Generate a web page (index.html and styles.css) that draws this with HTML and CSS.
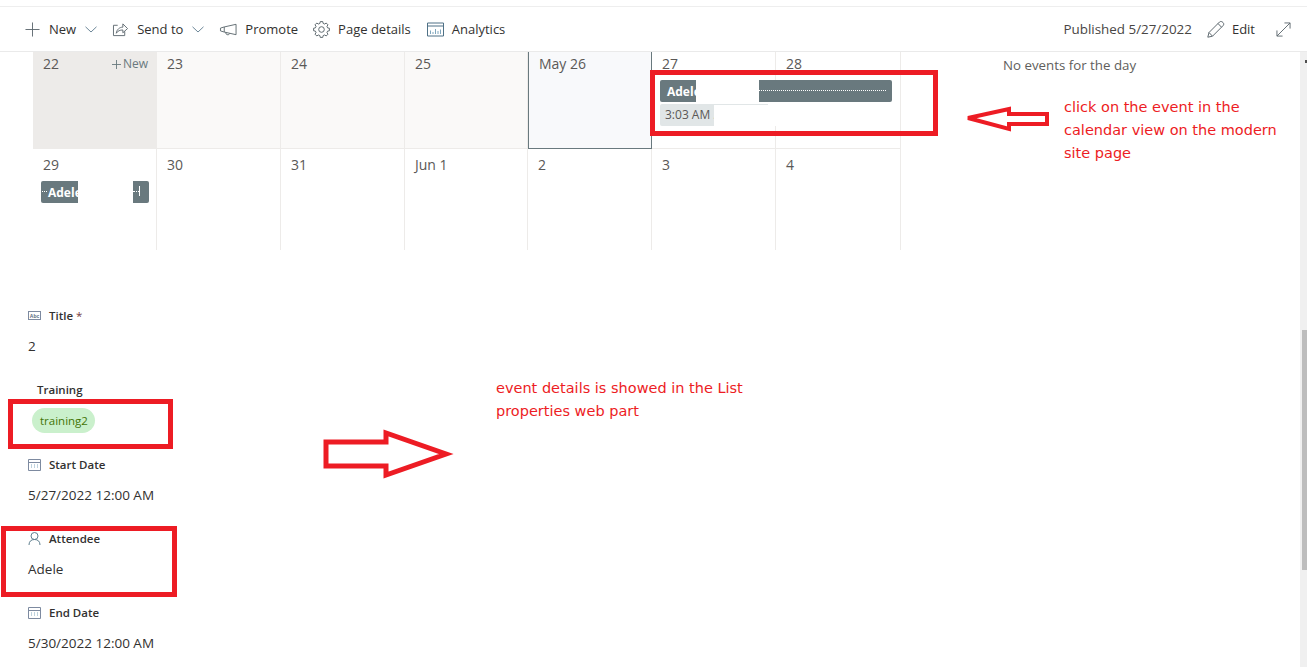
FILE: index.html
```html
<!DOCTYPE html>
<html lang="en">
<head>
<meta charset="utf-8">
<title>Calendar view and list properties</title>
<link rel="stylesheet" href="styles.css">
</head>
<body>
<div class="page">
  <header class="command-bar">
    <div class="cmd"><svg class="ico" viewBox="0 0 16 16"><path d="M8 .5v15M.5 8h15"/></svg><span class="cmd-label">New</span><svg class="chev" viewBox="0 0 12 7"><path d="M.5.8 6 6l5.500-5.200"/></svg></div>
    <div class="cmd"><svg class="ico" viewBox="0 0 16 16"><path d="M5 3.500H.5v11h12V10"/><path d="M3.500 12c.5-4 3.500-6.500 7-6.500V2l5 5-5 4.500V8.500c-3 0-5.500 1-7 3.500z"/></svg><span class="cmd-label">Send to</span><svg class="chev" viewBox="0 0 12 7"><path d="M.5.8 6 6l5.500-5.200"/></svg></div>
    <div class="cmd cmd-tight"><svg class="ico ico-wide" viewBox="0 0 18 14"><path d="M.5 5.500v3l4 1.200L17 12.500V1.500L4.500 4.300z"/><path d="M4.500 4.300v5.400M6 10.200c0 3 4 3 4 1"/></svg><span class="cmd-label">Promote</span></div>
    <div class="cmd cmd-tight cmd-details"><svg class="ico ico-wide" viewBox="-8.500 -8.500 17 17"><polygon points="6.085,-1.63 7.9,-1.25 7.9,1.25 6.085,1.63 5.456,3.15 6.47,4.7 4.7,6.47 3.15,5.456 1.63,6.085 1.25,7.9 -1.25,7.9 -1.63,6.085 -3.15,5.456 -4.7,6.47 -6.47,4.7 -5.456,3.15 -6.085,1.63 -7.9,1.25 -7.9,-1.25 -6.085,-1.63 -5.456,-3.15 -6.47,-4.7 -4.7,-6.47 -3.15,-5.456 -1.63,-6.085 -1.25,-7.9 1.25,-7.9 1.63,-6.085 3.15,-5.456 4.7,-6.47 6.47,-4.7 5.456,-3.15"/><circle r="2.800"/></svg><span class="cmd-label">Page details</span></div>
    <div class="cmd cmd-tight"><svg class="ico ico-wide ico-blue" viewBox="0 0 17 14"><path d="M.5.500h16v13H.5zM.5 3.500h16"/><path class="thin" d="M3.500 11.500V8M6 11.500V9.500M8.500 11.500V6.500M11 11.500V8.500M13.500 11.500V7"/></svg><span class="cmd-label">Analytics</span></div>
    <div class="cmd-right">
      <span class="cmd-label published">Published 5/27/2022</span>
      <div class="cmd cmd-tight"><svg class="ico ico-wide" viewBox="0 0 17 17"><path d="M.8 16.200 2 11.500 12.500 1c1-1 2.500-.5 3.500.5s1 2.200 0 3.200L5.500 15.200zM2 11.500l3.500 3.700M11 2.500l3.500 3.700"/></svg><span class="cmd-label">Edit</span></div>
      <svg class="ico expand" viewBox="0 0 16 16"><path d="M1 15 15 1M9 1h6v6M1 9v6h6"/></svg>
    </div>
  </header>

  <div class="viewport">
    <main class="content">
      <section class="calendar-row">
        <div class="calendar">
          <div class="cal-grid">
            <div class="day day-hover"><span>22</span><span class="new-link"><svg class="new-plus" viewBox="0 0 10 10"><path d="M5 0v10M0 5h10"/></svg>New</span></div>
            <div class="day day-past"><span>23</span></div>
            <div class="day day-past"><span>24</span></div>
            <div class="day day-past"><span>25</span></div>
            <div class="day day-today"><span>May 26</span></div>
            <div class="day"><span>27</span></div>
            <div class="day"><span>28</span></div>
            <div class="day"><span>29</span></div>
            <div class="day"><span>30</span></div>
            <div class="day"><span>31</span></div>
            <div class="day"><span>Jun 1</span></div>
            <div class="day"><span>2</span></div>
            <div class="day"><span>3</span></div>
            <div class="day"><span>4</span></div>
          </div>
          <div class="cal-grid cal-events">
            <div class="event event-one">
              <div class="event-bar">
                <div class="bar-piece bar-start"><b>Adele</b></div>
                <div class="bar-piece bar-end"><i class="dots"></i></div>
              </div>
              <div class="event-time"><span class="time-chip">3:03 AM .</span><i class="time-rest"></i></div>
            </div>
            <div class="event event-two">
              <div class="event-bar">
                <div class="bar-piece bar-start-two"><i class="lead-dots"></i><b>Adele</b></div>
                <div class="bar-piece bar-end-two"><i class="tail-dots"></i><i class="tail-stop"></i></div>
              </div>
            </div>
          </div>
        </div>
        <aside class="agenda">No events for the day</aside>
      </section>

      <section class="props">
        <div class="field field-tight">
          <div class="field-label"><svg class="field-ico" viewBox="0 0 13 9"><rect x=".5" y=".5" width="12" height="8"/><text x="6.500" y="6.500" class="abc">Abc</text></svg>Title <em class="req">*</em></div>
          <div class="field-value">2</div>
        </div>
        <div class="field">
          <div class="field-label label-plain">Training</div>
          <div class="field-value value-pill"><span class="pill">training2</span></div>
        </div>
        <div class="field field-tight">
          <div class="field-label"><svg class="field-ico cal" viewBox="0 0 13 13"><path d="M.5 1.500h12v11H.5zM.5 4.500h12"/><path class="thin" d="M3 7h1M6 7h1M9 7h1M3 9h1M6 9h1M9 9h1"/></svg>Start Date</div>
          <div class="field-value">5/27/2022 12:00 AM</div>
        </div>
        <div class="field field-tight">
          <div class="field-label"><svg class="field-ico cal person" viewBox="0 0 13 13"><circle cx="6.500" cy="4" r="3.500"/><path d="M1 13c0-3.500 2-5.500 5.500-5.500S12 9.500 12 13"/></svg>Attendee</div>
          <div class="field-value">Adele</div>
        </div>
        <div class="field field-tight">
          <div class="field-label"><svg class="field-ico cal" viewBox="0 0 13 13"><path d="M.5 1.500h12v11H.5zM.5 4.500h12"/><path class="thin" d="M3 7h1M6 7h1M9 7h1M3 9h1M6 9h1M9 9h1"/></svg>End Date</div>
          <div class="field-value">5/30/2022 12:00 AM</div>
        </div>
      </section>
    </main>
    <div class="scrollbar"><i class="scroll-arrow"></i><i class="scroll-thumb"></i></div>
  </div>

  <div class="mark mark-event"></div>
  <div class="mark mark-training"></div>
  <div class="mark mark-attendee"></div>
  <svg class="arrow arrow-left" viewBox="0 0 84 24"><path d="M2 12 43 3v5h38v10H43v5z"/></svg>
  <svg class="arrow arrow-right" viewBox="0 0 128 48"><path d="M2 12h60V3l60 21-60 21v-9H2z"/></svg>
  <p class="note note-calendar">click on the event in the<br>calendar view on the modern<br>site page</p>
  <p class="note note-props">event details is showed in the List<br>properties web part</p>
</div>
</body>
</html>
```

FILE: styles.css
```css
* { box-sizing: border-box; }
html, body { margin: 0; height: 100%; overflow: hidden; background: #fff; }
body { font-family: "Open Sans", "Noto Sans", sans-serif; color: #323130; }

.page {
  position: relative;
  width: 1307px;
  height: 667px;
  padding-top: 6px;
  display: flex;
  flex-direction: column;
  overflow: hidden;
}

/* Command bar */
.command-bar {
  height: 46px;
  flex: none;
  border-top: 1px solid #eeeeee;
  border-bottom: 1px solid #eaeaea;
  display: flex;
  align-items: center;
  gap: 16px;
  padding: 0 16px 0 25px;
  font-size: 13px;
}
.cmd { display: flex; align-items: center; gap: 9px; }
.cmd-tight { gap: 8px; }
.cmd-details { margin-left: -1px; }
.cmd-label { white-space: nowrap; line-height: 20px; }
.ico { width: 15px; height: 15px; flex: none; fill: none; stroke: #5f6a70; stroke-width: 1; overflow: visible; }
.ico-wide { width: 17px; height: 17px; }
.ico-blue { stroke: #4f7186; }
.thin { stroke: #7fa6bd; }
.chev { width: 12px; height: 7px; fill: none; stroke: #6d8798; stroke-width: 1; }
.cmd-right { margin-left: auto; display: flex; align-items: center; gap: 15px; }
.published { color: #484644; font-size: 13.400px; }
.expand { margin-left: 6px; }

/* Scrolled area */
.viewport { flex: 1; min-height: 0; display: flex; overflow: hidden; }
.content { flex: 1; min-width: 0; margin-top: -4px; }
.scrollbar { width: 7px; flex: none; background: #f0f0f0; padding: 8px 0 0 2px; display: flex; flex-direction: column; align-items: flex-end; }
.scroll-arrow { width: 2px; height: 3px; background: #505050; }
.scroll-thumb { width: 5px; height: 240px; margin-top: 267px; background: #bdbdbd; }

/* Calendar */
.calendar-row { display: flex; padding-left: 33px; }
.calendar { width: 868px; display: grid; }
.cal-grid {
  grid-area: 1 / 1;
  display: grid;
  grid-template-columns: 124px 124px 124px 123px 124px 124px 125px;
  grid-template-rows: 101px 101px;
  font-size: 14px;
  color: #5a5856;
}
.day {
  padding: 5px 10px 0;
  line-height: 22px;
  border-right: 1px solid #edebe9;
  border-bottom: 1px solid #edebe9;
  display: flex;
  justify-content: space-between;
  align-items: flex-start;
  font-weight: 500;
}
.day:nth-child(n+8) { border-bottom: 0; }
.day-hover { background: #edebe9; padding-right: 8px; border-right-color: #edebe9; }
.day-past { background: #faf9f8; }
.day-today { background: #f8f9fb; border: 1px solid #69797e; border-top: 0; }
.new-link { display: flex; align-items: center; gap: 2px; font-size: 12px; font-weight: 400; color: #69797e; }
.new-plus { width: 9px; height: 9px; fill: none; stroke: #69797e; stroke-width: 1; }

.event { margin-top: 32px; font-size: 12px; align-self: start; }
.event-one { grid-column: 6 / 8; grid-row: 1; margin-left: 8px; margin-right: 9px; }
.event-two { grid-column: 1; grid-row: 2; margin-left: 8px; margin-right: 8px; }
.event-bar { height: 22px; background: #fff; display: flex; justify-content: space-between; }
.bar-piece { background: #69797e; color: #fff; display: flex; align-items: center; overflow: hidden; white-space: nowrap; }
.bar-piece b { font-weight: 700; }
.bar-start { width: 36px; padding-left: 7px; border-radius: 2px 0 0 2px; }
.bar-end { width: 133px; border-radius: 0 2px 2px 0; padding-right: 6px; }
.dots { flex: 1; border-top: 1px dotted #fff; margin-top: -2px; }
.bar-start-two { width: 37px; padding-left: 1px; border-radius: 2px 0 0 2px; }
.lead-dots { width: 5px; flex: none; border-top: 1px dotted #fff; margin-right: 1px; margin-top: -2px; }
.bar-end-two { width: 16px; border-radius: 0 2px 2px 0; }
.tail-dots { width: 6px; border-top: 1px dotted #fff; margin-top: -2px; }
.tail-stop { width: 1px; height: 10px; background: #fff; margin-top: -2px; }
.event-time { height: 24px; background: #fff; padding-top: 2px; display: flex; align-items: flex-start; }
.time-chip { width: 54px; height: 22px; flex: none; background: #e1e6e7; color: #5a5856; line-height: 22px; padding-left: 5px; overflow: hidden; white-space: nowrap; border-radius: 2px 0 0 2px; }
.time-rest { width: 54px; height: 1px; background: #e1e6e7; }

.agenda { padding-left: 102px; padding-top: 7px; font-size: 13.300px; line-height: 20px; color: #605e5c; }

/* List properties */
.props { padding: 55px 0 0 28px; }
.field { height: 75px; }
.field-tight { height: 74px; }
.field-label { display: flex; align-items: center; height: 20px; font-size: 11.500px; font-weight: 600; color: #323130; gap: 8px; }
.label-plain { padding-left: 9px; }
.req { font-style: normal; font-weight: 400; color: #7a3a40; margin-left: -5px; }
.field-ico { width: 13px; height: 9px; flex: none; fill: none; stroke: #7d8aa0; stroke-width: 1; overflow: visible; }
.field-ico.cal { height: 13px; }
.field-ico.person { stroke: #5f7f8f; }
.abc { font-family: "Liberation Sans", sans-serif; font-size: 5px; fill: #5a6a80; stroke: none; text-anchor: middle; }
.field-value { margin-top: 11px; font-size: 13.500px; line-height: 20px; color: #323130; }
.value-pill { margin-top: 9px; padding-left: 4px; line-height: 24px; height: 24px; }
.pill { display: inline-block; height: 25px; line-height: 25px; padding: 0 7px 0 8px; border-radius: 12.500px; background: #caf0cc; color: #437406; font-size: 11.500px; }

/* Screenshot annotations lying over the page */
.mark { position: absolute; border: 5px solid #ed1c24; }
.mark-event { left: 650px; top: 70px; width: 288px; height: 66px; }
.mark-training { left: 8px; top: 399px; width: 165px; height: 50px; }
.mark-attendee { left: 1px; top: 526px; width: 176px; height: 71px; }
.arrow { position: absolute; fill: #fff; stroke: #ed1c24; overflow: visible; }
.arrow-left { left: 966px; top: 106px; width: 84px; height: 24px; stroke-width: 4; }
.arrow-right { left: 324px; top: 430px; width: 128px; height: 48px; stroke-width: 5; }
.note { position: absolute; margin: 0; color: #ed1c24; font-size: 14.500px; line-height: 23px; white-space: nowrap; font-family: "DejaVu Sans", sans-serif; }
.note-calendar { left: 1064px; top: 96px; }
.note-props { left: 496px; top: 377px; }
```
